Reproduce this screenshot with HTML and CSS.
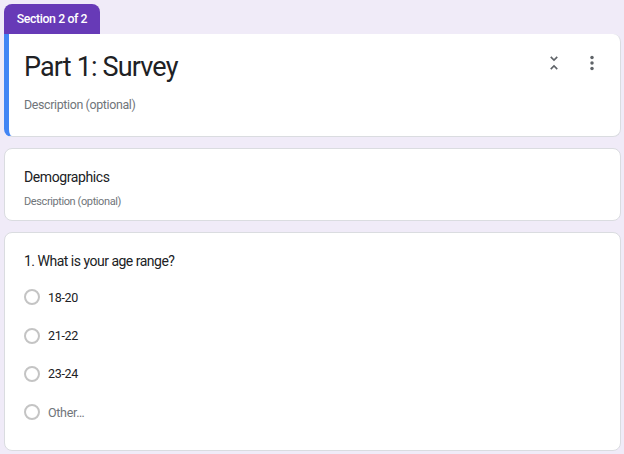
FILE: index.html
```html
<!DOCTYPE html>
<html>
<head>
<meta charset="utf-8">
<link rel="stylesheet" href="styles.css">
</head>
<body>
<div class="page">
  <div class="tab">Section 2 of 2</div>
  <div class="card card-head">
    <div class="head-row">
      <div class="title">Part 1: Survey</div>
      <div class="icons">
        <svg class="ic-collapse" viewBox="0 0 24 24" width="20" height="20"><path fill="#5f6368" d="M7.41 18.59L8.83 20 12 16.83 15.17 20l1.41-1.41L12 14l-4.59 4.59zm9.18-13.18L15.17 4 12 7.17 8.83 4 7.41 5.41 12 10l4.59-4.59z"/></svg>
        <svg class="ic-more" viewBox="0 0 24 24" width="22" height="22"><circle cx="12" cy="6" r="1.9" fill="#5f6368"/><circle cx="12" cy="12" r="1.9" fill="#5f6368"/><circle cx="12" cy="18" r="1.9" fill="#5f6368"/></svg>
      </div>
    </div>
    <div class="desc">Description (optional)</div>
  </div>
  <div class="card card-sub">
    <div class="sub-title">Demographics</div>
    <div class="sub-desc">Description (optional)</div>
  </div>
  <div class="card card-q">
    <div class="question">1. What is your age range?</div>
    <div class="option"><span class="radio"></span><span class="label">18-20</span></div>
    <div class="option"><span class="radio"></span><span class="label">21-22</span></div>
    <div class="option"><span class="radio"></span><span class="label">23-24</span></div>
    <div class="option"><span class="radio"></span><span class="label other">Other…</span></div>
  </div>
</div>
</body>
</html>
```

FILE: styles.css
```css
html, body {
  margin: 0;
  padding: 0;
  background: #f0ebf8;
  font-family: Roboto, "Liberation Sans", Arial, sans-serif;
  color: #202124;
}
.page {
  padding: 4px 3px 0 4px;
  display: flex;
  flex-direction: column;
  align-items: flex-start;
}
.tab {
  width: 96px;
  height: 30px;
  background: #673ab7;
  color: #fff;
  border-radius: 8px 8px 0 0;
  font-size: 12.3px;
  letter-spacing: -0.4px;
  font-weight: 500;
  display: flex;
  align-items: center;
  justify-content: center;
  box-sizing: border-box;
}
.card {
  width: 617px;
  box-sizing: border-box;
  background: #fff;
  border: 1px solid #dadce0;
  border-radius: 8px;
  margin-bottom: 11px;
}
.card-head {
  border-top-left-radius: 0;
  border-left: 5px solid #4285f4;
  border-top: none;
  height: 103px;
  padding: 15px 17px 0 15px;
}
.head-row {
  display: flex;
  justify-content: space-between;
  align-items: flex-start;
}
.title {
  font-size: 27px;
  line-height: 36px;
  letter-spacing: -0.85px;
}
.icons {
  display: flex;
  align-items: center;
  gap: 17px;
  margin-top: 3px;
}
.icons svg { display: block; }
.desc {
  margin-top: 11px;
  font-size: 12.4px;
  letter-spacing: -0.35px;
  line-height: 18px;
  color: #70757a;
}
.card-sub {
  height: 73px;
  padding: 18px 19px 0 19px;
}
.sub-title {
  font-size: 14px;
  letter-spacing: -0.4px;
  line-height: 20px;
}
.sub-desc {
  margin-top: 7px;
  font-size: 11px;
  letter-spacing: -0.4px;
  line-height: 16px;
  color: #70757a;
}
.card-q {
  height: 219px;
  padding: 18px 19px 0 19px;
  margin-bottom: 0;
}
.question {
  font-size: 14px;
  letter-spacing: -0.5px;
  line-height: 20px;
  margin-bottom: 7px;
}
.option {
  display: flex;
  align-items: center;
  height: 38.4px;
}
.radio {
  width: 16px;
  height: 16px;
  box-sizing: border-box;
  border: 2px solid #c4c4c4;
  border-radius: 50%;
  margin-right: 8px;
  flex: none;
}
.label {
  font-size: 12.5px;
  letter-spacing: -0.3px;
  color: #202124;
}
.label.other { color: #70757a; }
```
